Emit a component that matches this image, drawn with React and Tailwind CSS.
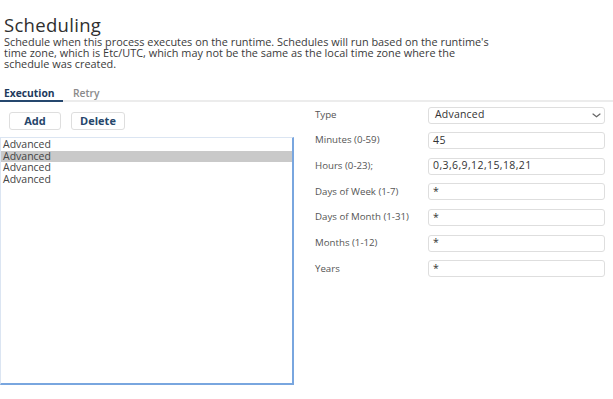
import React from "react";

const rows = [
  { label: "Minutes (0-59)", value: "45" },
  { label: "Hours (0-23);", value: "0,3,6,9,12,15,18,21" },
  { label: "Days of Week (1-7)", value: "*" },
  { label: "Days of Month (1-31)", value: "*" },
  { label: "Months (1-12)", value: "*" },
  { label: "Years", value: "*" },
];

export default function App() {
  return (
    <div className="w-[613px] h-[399px] bg-white overflow-hidden text-[#333] font-['Open_Sans',sans-serif]">
      <div className="pl-[4px] pt-[15px]">
        <h1 className="text-[18.5px] leading-[20px] font-normal text-[#2f2f2f] tracking-[0.3px]">Scheduling</h1>
        <p className="mt-[1px] w-[494px] text-[10.9px] leading-[11px] text-[#3a3a3a]">
          Schedule when this process executes on the runtime. Schedules will run based on the runtime's time zone, which is Etc/UTC, which may not be the same as the local time zone where the schedule was created.
        </p>
      </div>
      <div className="mt-[18px] flex border-b-[2px] border-[#ececec] text-[10.3px] leading-[13px] font-bold">
        <div className="w-[63px] pl-[4px] border-b-[2px] border-[#25476e] -mb-[2px] text-[#1e3a5c]">Execution</div>
        <div className="pl-[10px] text-[#8a8a8a] font-semibold">Retry</div>
      </div>
      <div className="flex">
        <div className="w-[294px] flex flex-col">
          <div className="flex gap-[10px] pl-[9px] pt-[10px]">
            <button className="w-[52px] h-[18px] rounded-[3px] border border-[#dedede] text-[11px] leading-[16px] font-bold text-[#26466b]">Add</button>
            <button className="w-[54px] h-[18px] rounded-[3px] border border-[#dedede] text-[11px] leading-[16px] font-bold text-[#26466b]">Delete</button>
          </div>
          <div className="mt-[7px] h-[248px] border-t border-l border-[#dbe5f2] border-r-[2px] border-b-[2px] border-r-[#79a6df] border-b-[#79a6df] pt-[1px] text-[10.5px] leading-[11.7px] text-[#444]">
            <div className="pl-[2px]">Advanced</div>
            <div className="pl-[2px] bg-[#c9c9c9]">Advanced</div>
            <div className="pl-[2px]">Advanced</div>
            <div className="pl-[2px]">Advanced</div>
          </div>
        </div>
        <div className="flex-1 pl-[21px] pr-[8px] pt-[4.5px] flex flex-col gap-[8.67px] text-[9.7px] text-[#555]">
          <div className="flex items-center h-[17px]">
            <div className="w-[113px]">Type</div>
            <div className="flex-1 h-[17px] rounded-[3px] border border-[#dedede] flex items-center justify-between pl-[6px] pr-[3px] text-[10.5px] tracking-[0.2px] text-[#333]">
              <span>Advanced</span>
              <svg width="9" height="5" viewBox="0 0 9 5" fill="none">
                <path d="M1 1 L4.5 3.8 L8 1" stroke="#666" strokeWidth="1.2" strokeLinecap="round" strokeLinejoin="round" />
              </svg>
            </div>
          </div>
          {rows.map((r) => (
            <div key={r.label} className="flex items-center h-[17px]">
              <div className="w-[113px]">{r.label}</div>
              <div className="flex-1 h-[17px] rounded-[3px] border border-[#dedede] flex items-center pl-[4px] text-[10.5px] tracking-[0.4px] text-[#333]">
                {r.value}
              </div>
            </div>
          ))}
        </div>
      </div>
    </div>
  );
}
